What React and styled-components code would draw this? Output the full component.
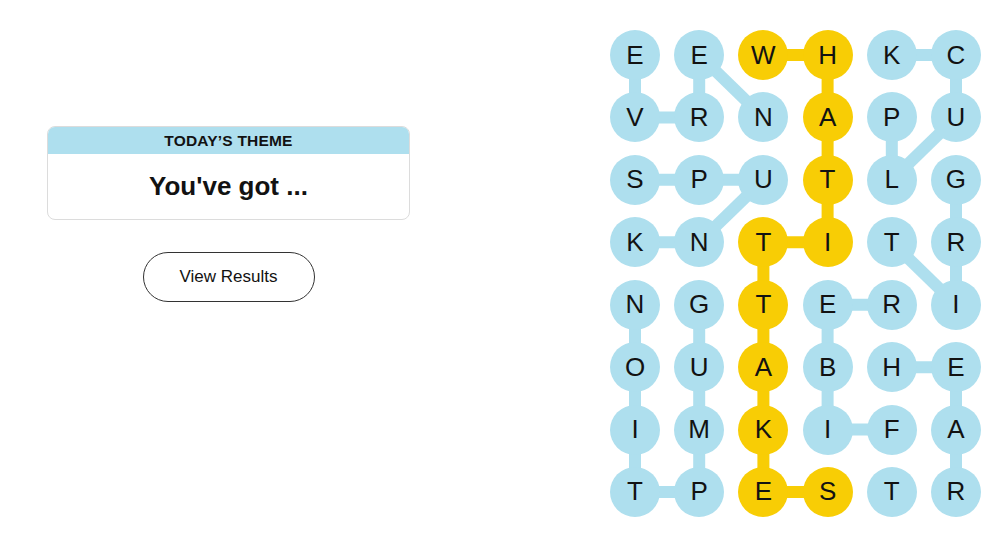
import React from 'react';
import styled, { createGlobalStyle } from 'styled-components';

const GlobalStyle = createGlobalStyle`
  html, body {
    margin: 0;
    padding: 0;
    background: #ffffff;
  }
  body {
    font-family: 'Liberation Sans', Arial, sans-serif;
    color: #121212;
  }
`;

const CELL = 50;
const COL_GAP = 14.2;
const ROW_GAP = 12.43;
const BLUE = '#aedfee';
const YELLOW = '#f8cd05';

const letters = [
  'EEWHKC',
  'VRNAPU',
  'SPUTLG',
  'KNTITR',
  'NGTERI',
  'OUABHE',
  'IMKIFA',
  'TPESTR',
];

// cells that belong to the spangram / found theme word
const found = new Set(['0-2', '0-3', '1-3', '2-3', '3-3', '3-2', '4-2', '5-2', '6-2', '7-2', '7-3']);

// [r1, c1, r2, c2, isFound]
const links = [
  [0, 0, 1, 0], [1, 0, 1, 1], [0, 1, 1, 1], [0, 1, 1, 2],
  [0, 4, 0, 5], [0, 5, 1, 5], [1, 5, 2, 4], [1, 4, 2, 4],
  [2, 0, 2, 1], [2, 1, 2, 2], [2, 2, 3, 1], [3, 0, 3, 1],
  [2, 5, 3, 5], [3, 4, 4, 5], [3, 5, 4, 5],
  [4, 0, 5, 0], [5, 0, 6, 0], [6, 0, 7, 0], [7, 0, 7, 1],
  [4, 1, 5, 1], [5, 1, 6, 1], [6, 1, 7, 1],
  [4, 3, 4, 4], [4, 3, 5, 3], [5, 3, 6, 3], [6, 3, 6, 4],
  [5, 4, 5, 5], [5, 5, 6, 5], [6, 5, 7, 5],
  [0, 2, 0, 3, true], [0, 3, 1, 3, true], [1, 3, 2, 3, true], [2, 3, 3, 3, true],
  [3, 3, 3, 2, true], [3, 2, 4, 2, true], [4, 2, 5, 2, true], [5, 2, 6, 2, true],
  [6, 2, 7, 2, true], [7, 2, 7, 3, true],
];

const cx = (c) => c * (CELL + COL_GAP) + CELL / 2;
const cy = (r) => r * (CELL + ROW_GAP) + CELL / 2;

const Page = styled.div`
  display: flex;
  align-items: flex-start;
  padding: 30px 0 0 47px;
  min-height: 548px;
  box-sizing: border-box;
`;

const SidePanel = styled.div`
  width: 363px;
  margin-top: 96px;
  display: flex;
  flex-direction: column;
  align-items: center;
  gap: 32px;
`;

const ThemeCard = styled.div`
  width: 100%;
  border: 1px solid #dcdcdc;
  border-radius: 8px;
  overflow: hidden;
  box-sizing: border-box;
`;

const ThemeHeader = styled.div`
  background: ${BLUE};
  height: 27px;
  display: flex;
  align-items: center;
  justify-content: center;
  font-weight: 700;
  font-size: 15.5px;
  letter-spacing: 0.2px;
  color: #121212;
`;

const ThemeBody = styled.div`
  height: 65px;
  display: flex;
  align-items: center;
  justify-content: center;
  font-weight: 700;
  font-size: 26px;
  color: #121212;
`;

const ResultsButton = styled.button`
  width: 172px;
  height: 50px;
  border: 1px solid #333333;
  border-radius: 25px;
  background: #ffffff;
  font-family: 'Liberation Sans', Arial, sans-serif;
  font-size: 17px;
  color: #121212;
  cursor: pointer;
`;

const Board = styled.div`
  position: relative;
  margin-left: 200px;
  display: grid;
  grid-template-columns: repeat(6, ${CELL}px);
  grid-auto-rows: ${CELL}px;
  column-gap: ${COL_GAP}px;
  row-gap: ${ROW_GAP}px;
`;

const Links = styled.svg`
  position: absolute;
  left: 0;
  top: 0;
  width: 100%;
  height: 100%;
  pointer-events: none;
`;

const Letter = styled.div`
  position: relative;
  width: ${CELL}px;
  height: ${CELL}px;
  border-radius: 50%;
  background: ${(p) => (p.$found ? YELLOW : BLUE)};
  display: flex;
  align-items: center;
  justify-content: center;
  font-size: 26px;
  color: #121212;
  user-select: none;
`;

export default function App() {
  return (
    <>
      <GlobalStyle />
      <Page>
        <SidePanel>
          <ThemeCard>
            <ThemeHeader>TODAY’S THEME</ThemeHeader>
            <ThemeBody>You've got ...</ThemeBody>
          </ThemeCard>
          <ResultsButton>View Results</ResultsButton>
        </SidePanel>
        <Board>
          <Links>
            {links.map(([r1, c1, r2, c2, f], i) => (
              <line
                key={i}
                x1={cx(c1)}
                y1={cy(r1)}
                x2={cx(c2)}
                y2={cy(r2)}
                stroke={f ? YELLOW : BLUE}
                strokeWidth="12"
              />
            ))}
          </Links>
          {letters.map((row, r) =>
            row.split('').map((ch, c) => (
              <Letter key={`${r}-${c}`} $found={found.has(`${r}-${c}`)}>
                {ch}
              </Letter>
            ))
          )}
        </Board>
      </Page>
    </>
  );
}
